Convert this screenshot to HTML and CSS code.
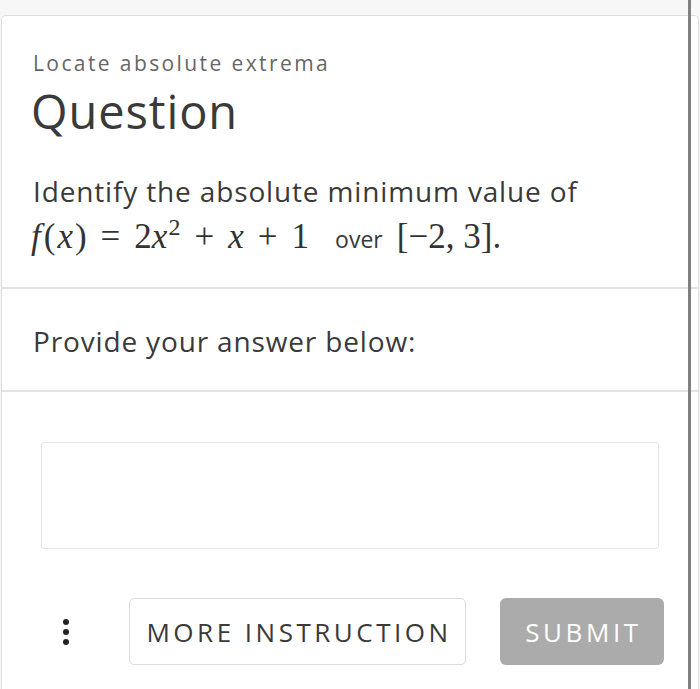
FILE: index.html
```html
<!DOCTYPE html>
<html lang="en">
<head>
  <meta charset="UTF-8">
  <meta name="viewport" content="width=device-width, initial-scale=1.0">
  <title>Locate absolute extrema</title>
  <link rel="stylesheet" href="styles.css">
</head>
<body>
  <div class="card">
    <div class="section head">
      <div class="topic">Locate absolute extrema</div>
      <h1 class="title">Question</h1>
      <p class="prompt">Identify the absolute minimum value of<br>
        <span class="math first"><i class="fn">f</i>(<i class="arg">x</i>)<span class="rel">=</span>2<i>x</i><sup>2</sup><span class="bin">+</span><i>x</i><span class="bin">+</span>1</span> <span class="word">over</span> <span class="math last">[&minus;2, 3].</span>
      </p>
    </div>

    <div class="section answer-label">
      <p>Provide your answer below:</p>
    </div>

    <div class="section answer">
      <div class="answer-box"></div>

      <div class="actions">
        <button class="more-btn" type="button" aria-label="More">
          <span></span><span></span><span></span>
        </button>
        <button class="instr-btn" type="button">MORE INSTRUCTION</button>
        <button class="submit-btn" type="button">SUBMIT</button>
      </div>
    </div>
  </div>

  <div class="scroll-bar"></div>
</body>
</html>
```

FILE: styles.css
```css
body {
  margin: 0;
  background-color: #f7f7f7;
  font-family: "Open Sans", Arial, sans-serif;
  color: #333;
  height: 689px;
  overflow: hidden;
}
.card {
  margin: 15px 1px 0 1px;
  background: #fff;
  border: 1px solid #dcdcdc;
  border-bottom: none;
  border-radius: 5px 5px 0 0;
  height: 700px;
}
.section {
  padding: 0 31px;
}
.head {
  padding-top: 32px;
  padding-bottom: 27px;
  border-bottom: 2px solid #e3e3e3;
}
.topic {
  font-size: 21px;
  line-height: 30px;
  letter-spacing: 2.4px;
  color: #666;
}
.title {
  margin: 5px 0 0 -2px;
  font-size: 47px;
  line-height: 56px;
  letter-spacing: 0.9px;
  font-weight: normal;
  color: #3a3a3a;
}
.prompt {
  margin: 29px 0 0;
  font-size: 28px;
  line-height: 46px;
  letter-spacing: 0.85px;
  color: #3a3a3a;
}
.prompt .word {
  font-size: 23px;
  line-height: 1;
  letter-spacing: 0;
}
.math {
  font-family: "Liberation Serif", "Times New Roman", serif;
  font-size: 35px;
  line-height: 0;
  letter-spacing: 0;
  color: #333;
}
.math.first {
  margin-left: -2px;
  margin-right: 18px;
}
.math.last {
  margin-left: 6px;
}
.math .fn {
  margin-right: 3px;
}
.math .arg {
  margin: 0 2px;
}
.math sup {
  font-size: 24px;
  line-height: 0;
  margin-left: 1px;
}
.math .rel {
  margin: 0 14px;
}
.math .bin {
  margin: 0 14px;
}
.answer-label {
  border-bottom: 2px solid #e3e3e3;
}
.answer-label p {
  margin: 0;
  padding: 32px 0 29px;
  font-size: 28px;
  line-height: 40px;
  letter-spacing: 0.85px;
  color: #3a3a3a;
}
.answer {
  padding: 50px 34px 0 33px;
}
.answer-box {
  margin: 0 5px 0 6px;
  height: 105px;
  border: 1px solid #e6e6e6;
  border-radius: 3px;
}
.actions {
  display: flex;
  align-items: center;
  margin-top: 49px;
}
.more-btn {
  display: flex;
  flex-direction: column;
  gap: 4px;
  padding: 0;
  margin-left: 28px;
  border: none;
  background: none;
}
.more-btn span {
  width: 6px;
  height: 6px;
  border-radius: 50%;
  background: #222;
}
.instr-btn {
  margin-left: 60px;
  width: 337px;
  height: 67px;
  padding: 0 0 0 3px;
  border: 1px solid #dcdcdc;
  border-radius: 5px;
  background: #fff;
  font-family: "Open Sans", Arial, sans-serif;
  font-size: 26px;
  letter-spacing: 3.5px;
  color: #3a3a3a;
}
.submit-btn {
  margin-left: auto;
  width: 164px;
  height: 67px;
  padding: 0 0 0 3px;
  border: none;
  border-radius: 6px;
  background: #ababab;
  font-family: "Open Sans", Arial, sans-serif;
  font-size: 26px;
  letter-spacing: 3.6px;
  color: #fff;
}
.scroll-bar {
  position: absolute;
  top: 0;
  left: 688px;
  width: 3px;
  height: 689px;
  background: #808080;
}
```
